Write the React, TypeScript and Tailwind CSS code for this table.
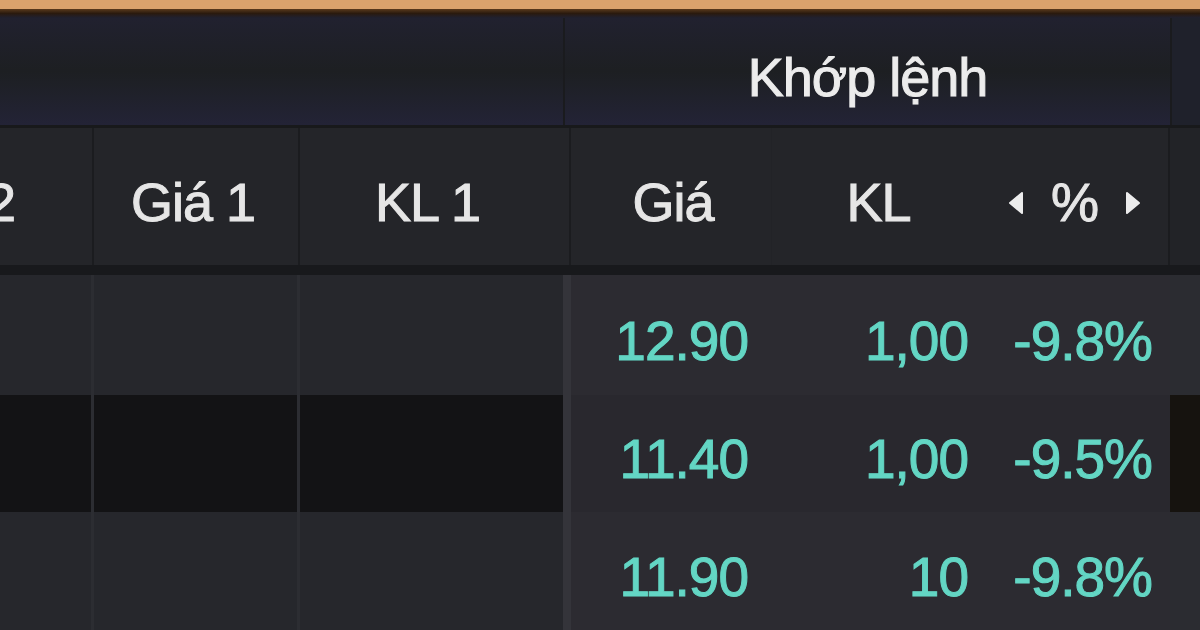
const font = { fontFamily: '"Liberation Sans", Arial, sans-serif' }

const rows = [
  { price: '12.90', vol: '1,00', pct: '-9.8%', dark: false },
  { price: '11.40', vol: '1,00', pct: '-9.5%', dark: true },
  { price: '11.90', vol: '10', pct: '-9.8%', dark: false },
]

function Arrow({ dir }: { dir: 'left' | 'right' }) {
  return (
    <svg width="18" height="26" viewBox="0 0 18 26" className="shrink-0">
      {dir === 'left' ? (
        <path d="M15 3 L3 13 L15 23 Z" fill="#ececec" stroke="#ececec" strokeWidth="2" strokeLinejoin="round" />
      ) : (
        <path d="M3 3 L15 13 L3 23 Z" fill="#ececec" stroke="#ececec" strokeWidth="2" strokeLinejoin="round" />
      )}
    </svg>
  )
}

export default function App() {
  const cols = 'grid grid-cols-[94px_206px_271px_201px_213px_185px_30px]'

  return (
    <div className="w-[1200px] h-[630px] overflow-hidden bg-[#1d1e22]" style={font}>
      {/* top accent */}
      <div className="h-[9px] bg-[#daa26c]" />
      <div className="h-[9px] bg-gradient-to-b from-[#5a3a1c] via-[#2a1a0e] to-[#1f2030]" />

      {/* group header */}
      <div className="flex h-[107px] bg-gradient-to-b from-[#21212f] via-[#1d1f22] to-[#232336]">
        <div className="w-[565px] border-r-2 border-[#1a1b1e]" />
        <div className="w-[605px] flex items-center justify-center pt-[12px] text-[54px] tracking-[-1px] text-[#ececec] [-webkit-text-stroke:1px_currentColor]">
          Khớp lệnh
        </div>
        <div className="flex-1 border-l-2 border-[#1a1b1e] bg-[#1f212b]" />
      </div>
      <div className="h-[3px] bg-[#18191b]" />

      {/* column header */}
      <div className={`${cols} h-[137px] bg-[#242529] text-[54px] tracking-[-1px] text-[#e6e6e6] [-webkit-text-stroke:1px_currentColor]`}>
        <div className="flex items-center justify-end pt-[12px] pr-[77px] overflow-hidden border-r-2 border-[#1b1c1f] whitespace-nowrap">
          KL 2
        </div>
        <div className="flex items-center justify-center pt-[12px] pr-[6px] border-r-2 border-[#1b1c1f]">Giá 1</div>
        <div className="flex items-center justify-center pt-[12px] pr-[14px] border-r-2 border-[#1b1c1f]">KL 1</div>
        <div className="flex items-center justify-center pt-[12px] pl-[4px] border-r border-[#222327]">Giá</div>
        <div className="flex items-center justify-center pt-[12px]">KL</div>
        <div className="flex items-center justify-center gap-[26px] pt-[12px] pr-[4px] border-r-2 border-[#1b1c1f]">
          <Arrow dir="left" />
          <span>%</span>
          <Arrow dir="right" />
        </div>
        <div className="bg-[#222327]" />
      </div>
      <div className="h-[10px] bg-[#18191c]" />

      {/* body */}
      {rows.map((r, i) => (
        <div
          key={i}
          className={`${cols} ${i === 1 ? 'h-[117px]' : i === 0 ? 'h-[120px]' : 'h-[118px]'} text-[55px] tracking-[-1px] text-[#63d6c4] [-webkit-text-stroke:1px_currentColor]`}
        >
          <div className={`border-r-[3px] border-[#2c2d32] ${r.dark ? 'bg-[#131315]' : 'bg-[#26272c]'}`} />
          <div className={`border-r-[3px] border-[#2c2d32] ${r.dark ? 'bg-[#131315]' : 'bg-[#26272c]'}`} />
          <div className={`border-r-[8px] border-[#34343a] ${r.dark ? 'bg-[#131315]' : 'bg-[#26272c]'}`} />
          <div className={`flex items-center justify-end pt-[12px] pr-[24px] ${r.dark ? 'bg-[#29282e]' : 'bg-[#2c2b31]'}`}>
            {r.price}
          </div>
          <div className={`flex items-center justify-end pt-[12px] pr-[17px] ${r.dark ? 'bg-[#29282e]' : 'bg-[#2c2b31]'}`}>
            {r.vol}
          </div>
          <div className={`flex items-center justify-end pt-[12px] pr-[18px] ${r.dark ? 'bg-[#29282e]' : 'bg-[#2c2b31]'}`}>
            {r.pct}
          </div>
          <div className={r.dark ? 'bg-[#16130f]' : 'bg-[#2b2c31]'} />
        </div>
      ))}
    </div>
  )
}
